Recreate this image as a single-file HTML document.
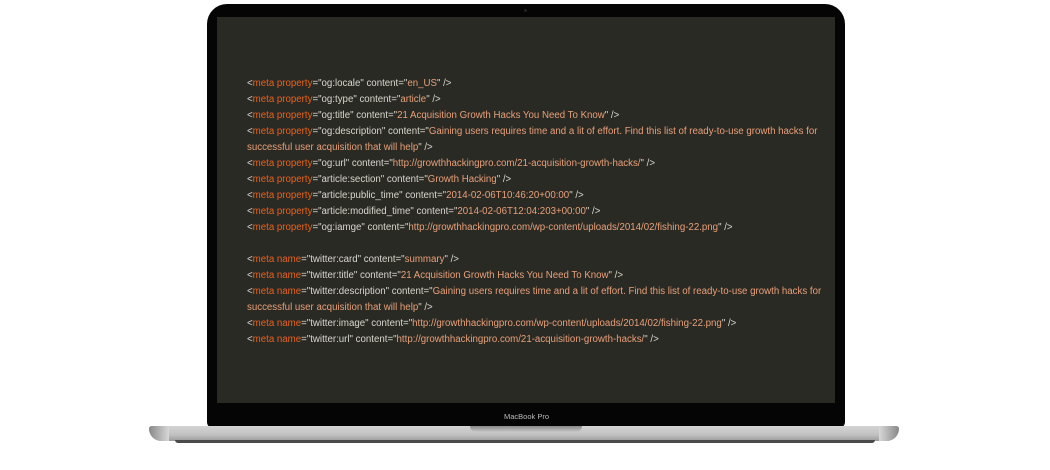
<!DOCTYPE html>
<html><head><style>
html,body{margin:0;padding:0;background:#fff;width:1050px;height:470px;overflow:hidden;position:relative}
.bezel{position:absolute;left:207px;top:4px;width:638px;height:424px;background:#050505;border-radius:20px 20px 6px 6px}
.screen{position:absolute;left:217px;top:17px;width:618px;height:386px;background:#2a2a24}
.cam{position:absolute;left:524px;top:9px;width:3px;height:3px;border-radius:50%;background:#222}
.label{position:absolute;left:504px;top:412px;font:7.5px "Liberation Sans",sans-serif;color:#bbb}
.base{position:absolute;left:149px;top:426px;width:750px;height:15px;background:linear-gradient(#d4d4d4,#c0c0c0 60%,#9a9a9a);border-radius:3px 3px 14px 14px}
.base:before{content:"";position:absolute;left:0;top:0;width:20px;height:15px;background:linear-gradient(90deg,#888,#d8d8d8);border-radius:3px 0 0 14px}
.base:after{content:"";position:absolute;right:0;top:0;width:20px;height:15px;background:linear-gradient(270deg,#888,#d8d8d8);border-radius:0 3px 14px 0}
.foot{position:absolute;left:175px;top:440px;width:700px;height:3px;background:#4a4a4a;border-radius:0 0 6px 6px}
.notch{position:absolute;left:470px;top:426px;width:112px;height:6px;background:linear-gradient(#888,#c8c8c8);border-radius:0 0 6px 6px}
.code{position:absolute;left:247px;top:76px;font:9.7px/16px "Liberation Sans",sans-serif;color:#d8d8d0;white-space:pre}
.o{color:#e8621e}.v{color:#e8a07a}
</style></head><body>
<div class="bezel"></div>
<div class="cam"></div>
<div class="screen"></div>
<div class="label">MacBook Pro</div>
<div class="base"></div>
<div class="foot"></div>
<div class="notch"></div>
<div class="code">&lt;<span class="o">meta property</span>="og:locale" content="<span class="v">en_US</span>" /&gt;
&lt;<span class="o">meta property</span>="og:type" content="<span class="v">article</span>" /&gt;
&lt;<span class="o">meta property</span>="og:title" content="<span class="v">21 Acquisition Growth Hacks You Need To Know</span>" /&gt;
&lt;<span class="o">meta property</span>="og:description" content="<span class="v">Gaining users requires time and a lit of effort. Find this list of ready-to-use growth hacks for</span>
<span class="v">successful user acquisition that will help</span>" /&gt;
&lt;<span class="o">meta property</span>="og:url" content="<span class="v">http://growthhackingpro.com/21-acquisition-growth-hacks/</span>" /&gt;
&lt;<span class="o">meta property</span>="article:section" content="<span class="v">Growth Hacking</span>" /&gt;
&lt;<span class="o">meta property</span>="article:public_time" content="<span class="v">2014-02-06T10:46:20+00:00</span>" /&gt;
&lt;<span class="o">meta property</span>="article:modified_time" content="<span class="v">2014-02-06T12:04:203+00:00</span>" /&gt;
&lt;<span class="o">meta property</span>="og:iamge" content="<span class="v">http://growthhackingpro.com/wp-content/uploads/2014/02/fishing-22.png</span>" /&gt;

&lt;<span class="o">meta name</span>="twitter:card" content="<span class="v">summary</span>" /&gt;
&lt;<span class="o">meta name</span>="twitter:title" content="<span class="v">21 Acquisition Growth Hacks You Need To Know</span>" /&gt;
&lt;<span class="o">meta name</span>="twitter:description" content="<span class="v">Gaining users requires time and a lit of effort. Find this list of ready-to-use growth hacks for</span>
<span class="v">successful user acquisition that will help</span>" /&gt;
&lt;<span class="o">meta name</span>="twitter:image" content="<span class="v">http://growthhackingpro.com/wp-content/uploads/2014/02/fishing-22.png</span>" /&gt;
&lt;<span class="o">meta name</span>="twitter:url" content="<span class="v">http://growthhackingpro.com/21-acquisition-growth-hacks/</span>" /&gt;</div>
</body></html>
